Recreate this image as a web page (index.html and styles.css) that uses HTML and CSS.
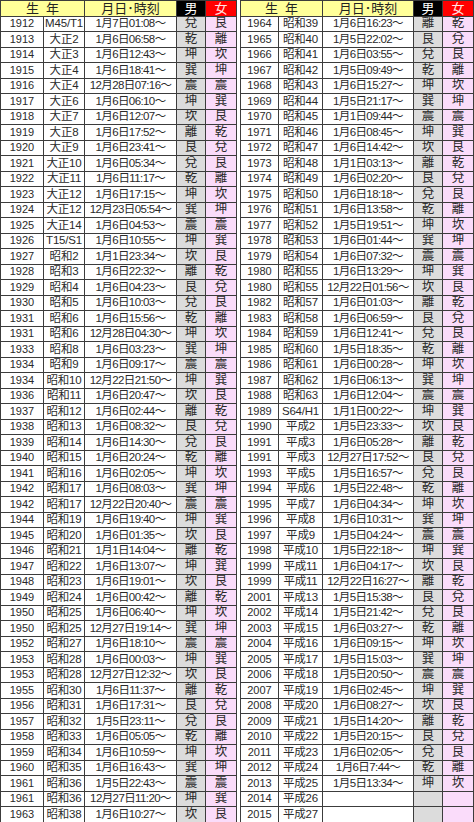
FILE: index.html
```html
<!DOCTYPE html>
<html lang="ja">
<head>
<meta charset="utf-8">
<title>年盤表</title>
<link rel="stylesheet" href="styles.css">
</head>
<body>
<div class="wrap">
<table class="tbl tbl-left">
<colgroup><col class="c-year"><col class="c-era"><col class="c-date"><col class="c-m"><col class="c-f"></colgroup>
<thead><tr><th colspan="2" class="h-y">生&nbsp;&nbsp;年</th><th class="h-y">月日･時刻</th><th class="h-m">男</th><th class="h-f">女</th></tr></thead>
<tbody>
<tr><td>1912</td><td class="e">M45/T1</td><td class="d">1月7日01:08～</td><td class="m">兌</td><td class="f">艮</td></tr>
<tr><td>1913</td><td class="e">大正2</td><td class="d">1月6日06:58～</td><td class="m">乾</td><td class="f">離</td></tr>
<tr><td>1914</td><td class="e">大正3</td><td class="d">1月6日12:43～</td><td class="m">坤</td><td class="f">坎</td></tr>
<tr><td>1915</td><td class="e">大正4</td><td class="d">1月6日18:41～</td><td class="m">巽</td><td class="f">坤</td></tr>
<tr><td>1916</td><td class="e">大正4</td><td class="d">12月28日07:16～</td><td class="m">震</td><td class="f">震</td></tr>
<tr><td>1917</td><td class="e">大正6</td><td class="d">1月6日06:10～</td><td class="m">坤</td><td class="f">巽</td></tr>
<tr><td>1918</td><td class="e">大正7</td><td class="d">1月6日12:07～</td><td class="m">坎</td><td class="f">艮</td></tr>
<tr><td>1919</td><td class="e">大正8</td><td class="d">1月6日17:52～</td><td class="m">離</td><td class="f">乾</td></tr>
<tr><td>1920</td><td class="e">大正9</td><td class="d">1月6日23:41～</td><td class="m">艮</td><td class="f">兌</td></tr>
<tr><td>1921</td><td class="e">大正10</td><td class="d">1月6日05:34～</td><td class="m">兌</td><td class="f">艮</td></tr>
<tr><td>1922</td><td class="e">大正11</td><td class="d">1月6日11:17～</td><td class="m">乾</td><td class="f">離</td></tr>
<tr><td>1923</td><td class="e">大正12</td><td class="d">1月6日17:15～</td><td class="m">坤</td><td class="f">坎</td></tr>
<tr><td>1924</td><td class="e">大正12</td><td class="d">12月23日05:54～</td><td class="m">巽</td><td class="f">坤</td></tr>
<tr><td>1925</td><td class="e">大正14</td><td class="d">1月6日04:53～</td><td class="m">震</td><td class="f">震</td></tr>
<tr><td>1926</td><td class="e">T15/S1</td><td class="d">1月6日10:55～</td><td class="m">坤</td><td class="f">巽</td></tr>
<tr><td>1927</td><td class="e">昭和2</td><td class="d">1月1日23:34～</td><td class="m">坎</td><td class="f">艮</td></tr>
<tr><td>1928</td><td class="e">昭和3</td><td class="d">1月6日22:32～</td><td class="m">離</td><td class="f">乾</td></tr>
<tr><td>1929</td><td class="e">昭和4</td><td class="d">1月6日04:23～</td><td class="m">艮</td><td class="f">兌</td></tr>
<tr><td>1930</td><td class="e">昭和5</td><td class="d">1月6日10:03～</td><td class="m">兌</td><td class="f">艮</td></tr>
<tr><td>1931</td><td class="e">昭和6</td><td class="d">1月6日15:56～</td><td class="m">乾</td><td class="f">離</td></tr>
<tr><td>1931</td><td class="e">昭和6</td><td class="d">12月28日04:30～</td><td class="m">坤</td><td class="f">坎</td></tr>
<tr><td>1933</td><td class="e">昭和8</td><td class="d">1月6日03:23～</td><td class="m">巽</td><td class="f">坤</td></tr>
<tr><td>1934</td><td class="e">昭和9</td><td class="d">1月6日09:17～</td><td class="m">震</td><td class="f">震</td></tr>
<tr><td>1934</td><td class="e">昭和10</td><td class="d">12月22日21:50～</td><td class="m">坤</td><td class="f">巽</td></tr>
<tr><td>1936</td><td class="e">昭和11</td><td class="d">1月6日20:47～</td><td class="m">坎</td><td class="f">艮</td></tr>
<tr><td>1937</td><td class="e">昭和12</td><td class="d">1月6日02:44～</td><td class="m">離</td><td class="f">乾</td></tr>
<tr><td>1938</td><td class="e">昭和13</td><td class="d">1月6日08:32～</td><td class="m">艮</td><td class="f">兌</td></tr>
<tr><td>1939</td><td class="e">昭和14</td><td class="d">1月6日14:30～</td><td class="m">兌</td><td class="f">艮</td></tr>
<tr><td>1940</td><td class="e">昭和15</td><td class="d">1月6日20:24～</td><td class="m">乾</td><td class="f">離</td></tr>
<tr><td>1941</td><td class="e">昭和16</td><td class="d">1月6日02:05～</td><td class="m">坤</td><td class="f">坎</td></tr>
<tr><td>1942</td><td class="e">昭和17</td><td class="d">1月6日08:03～</td><td class="m">巽</td><td class="f">坤</td></tr>
<tr><td>1942</td><td class="e">昭和17</td><td class="d">12月22日20:40～</td><td class="m">震</td><td class="f">震</td></tr>
<tr><td>1944</td><td class="e">昭和19</td><td class="d">1月6日19:40～</td><td class="m">坤</td><td class="f">巽</td></tr>
<tr><td>1945</td><td class="e">昭和20</td><td class="d">1月6日01:35～</td><td class="m">坎</td><td class="f">艮</td></tr>
<tr><td>1946</td><td class="e">昭和21</td><td class="d">1月1日14:04～</td><td class="m">離</td><td class="f">乾</td></tr>
<tr><td>1947</td><td class="e">昭和22</td><td class="d">1月6日13:07～</td><td class="m">坤</td><td class="f">巽</td></tr>
<tr><td>1948</td><td class="e">昭和23</td><td class="d">1月6日19:01～</td><td class="m">坎</td><td class="f">艮</td></tr>
<tr><td>1949</td><td class="e">昭和24</td><td class="d">1月6日00:42～</td><td class="m">離</td><td class="f">乾</td></tr>
<tr><td>1950</td><td class="e">昭和25</td><td class="d">1月6日06:40～</td><td class="m">坤</td><td class="f">坎</td></tr>
<tr><td>1950</td><td class="e">昭和25</td><td class="d">12月27日19:14～</td><td class="m">巽</td><td class="f">坤</td></tr>
<tr><td>1952</td><td class="e">昭和27</td><td class="d">1月6日18:10～</td><td class="m">震</td><td class="f">震</td></tr>
<tr><td>1953</td><td class="e">昭和28</td><td class="d">1月6日00:03～</td><td class="m">坤</td><td class="f">巽</td></tr>
<tr><td>1953</td><td class="e">昭和28</td><td class="d">12月27日12:32～</td><td class="m">坎</td><td class="f">艮</td></tr>
<tr><td>1955</td><td class="e">昭和30</td><td class="d">1月6日11:37～</td><td class="m">離</td><td class="f">乾</td></tr>
<tr><td>1956</td><td class="e">昭和31</td><td class="d">1月6日17:31～</td><td class="m">艮</td><td class="f">兌</td></tr>
<tr><td>1957</td><td class="e">昭和32</td><td class="d">1月5日23:11～</td><td class="m">兌</td><td class="f">艮</td></tr>
<tr><td>1958</td><td class="e">昭和33</td><td class="d">1月6日05:05～</td><td class="m">乾</td><td class="f">離</td></tr>
<tr><td>1959</td><td class="e">昭和34</td><td class="d">1月6日10:59～</td><td class="m">坤</td><td class="f">坎</td></tr>
<tr><td>1960</td><td class="e">昭和35</td><td class="d">1月6日16:43～</td><td class="m">巽</td><td class="f">坤</td></tr>
<tr><td>1961</td><td class="e">昭和36</td><td class="d">1月5日22:43～</td><td class="m">震</td><td class="f">震</td></tr>
<tr><td>1961</td><td class="e">昭和36</td><td class="d">12月27日11:20～</td><td class="m">坤</td><td class="f">巽</td></tr>
<tr><td>1963</td><td class="e">昭和38</td><td class="d">1月6日10:27～</td><td class="m">坎</td><td class="f">艮</td></tr>
</tbody>
</table>
<table class="tbl tbl-right">
<colgroup><col class="c-year"><col class="c-era"><col class="c-date"><col class="c-m"><col class="c-f"></colgroup>
<thead><tr><th colspan="2" class="h-y">生&nbsp;&nbsp;年</th><th class="h-y">月日･時刻</th><th class="h-m">男</th><th class="h-f">女</th></tr></thead>
<tbody>
<tr><td>1964</td><td class="e">昭和39</td><td class="d">1月6日16:23～</td><td class="m">離</td><td class="f">乾</td></tr>
<tr><td>1965</td><td class="e">昭和40</td><td class="d">1月5日22:02～</td><td class="m">艮</td><td class="f">兌</td></tr>
<tr><td>1966</td><td class="e">昭和41</td><td class="d">1月6日03:55～</td><td class="m">兌</td><td class="f">艮</td></tr>
<tr><td>1967</td><td class="e">昭和42</td><td class="d">1月5日09:49～</td><td class="m">乾</td><td class="f">離</td></tr>
<tr><td>1968</td><td class="e">昭和43</td><td class="d">1月6日15:27～</td><td class="m">坤</td><td class="f">坎</td></tr>
<tr><td>1969</td><td class="e">昭和44</td><td class="d">1月5日21:17～</td><td class="m">巽</td><td class="f">坤</td></tr>
<tr><td>1970</td><td class="e">昭和45</td><td class="d">1月1日09:44～</td><td class="m">震</td><td class="f">震</td></tr>
<tr><td>1971</td><td class="e">昭和46</td><td class="d">1月6日08:45～</td><td class="m">坤</td><td class="f">巽</td></tr>
<tr><td>1972</td><td class="e">昭和47</td><td class="d">1月6日14:42～</td><td class="m">坎</td><td class="f">艮</td></tr>
<tr><td>1973</td><td class="e">昭和48</td><td class="d">1月1日03:13～</td><td class="m">離</td><td class="f">乾</td></tr>
<tr><td>1974</td><td class="e">昭和49</td><td class="d">1月6日02:20～</td><td class="m">艮</td><td class="f">兌</td></tr>
<tr><td>1975</td><td class="e">昭和50</td><td class="d">1月6日18:18～</td><td class="m">兌</td><td class="f">艮</td></tr>
<tr><td>1976</td><td class="e">昭和51</td><td class="d">1月6日13:58～</td><td class="m">乾</td><td class="f">離</td></tr>
<tr><td>1977</td><td class="e">昭和52</td><td class="d">1月5日19:51～</td><td class="m">坤</td><td class="f">坎</td></tr>
<tr><td>1978</td><td class="e">昭和53</td><td class="d">1月6日01:44～</td><td class="m">巽</td><td class="f">坤</td></tr>
<tr><td>1979</td><td class="e">昭和54</td><td class="d">1月6日07:32～</td><td class="m">震</td><td class="f">震</td></tr>
<tr><td>1980</td><td class="e">昭和55</td><td class="d">1月6日13:29～</td><td class="m">坤</td><td class="f">巽</td></tr>
<tr><td>1980</td><td class="e">昭和55</td><td class="d">12月22日01:56～</td><td class="m">坎</td><td class="f">艮</td></tr>
<tr><td>1982</td><td class="e">昭和57</td><td class="d">1月6日01:03～</td><td class="m">離</td><td class="f">乾</td></tr>
<tr><td>1983</td><td class="e">昭和58</td><td class="d">1月6日06:59～</td><td class="m">艮</td><td class="f">兌</td></tr>
<tr><td>1984</td><td class="e">昭和59</td><td class="d">1月6日12:41～</td><td class="m">兌</td><td class="f">艮</td></tr>
<tr><td>1985</td><td class="e">昭和60</td><td class="d">1月5日18:35～</td><td class="m">乾</td><td class="f">離</td></tr>
<tr><td>1986</td><td class="e">昭和61</td><td class="d">1月6日00:28～</td><td class="m">坤</td><td class="f">坎</td></tr>
<tr><td>1987</td><td class="e">昭和62</td><td class="d">1月6日06:13～</td><td class="m">巽</td><td class="f">坤</td></tr>
<tr><td>1988</td><td class="e">昭和63</td><td class="d">1月6日12:04～</td><td class="m">震</td><td class="f">震</td></tr>
<tr><td>1989</td><td class="e">S64/H1</td><td class="d">1月1日00:22～</td><td class="m">坤</td><td class="f">巽</td></tr>
<tr><td>1990</td><td class="e">平成2</td><td class="d">1月5日23:33～</td><td class="m">坎</td><td class="f">艮</td></tr>
<tr><td>1991</td><td class="e">平成3</td><td class="d">1月6日05:28～</td><td class="m">離</td><td class="f">乾</td></tr>
<tr><td>1991</td><td class="e">平成3</td><td class="d">12月27日17:52～</td><td class="m">艮</td><td class="f">兌</td></tr>
<tr><td>1993</td><td class="e">平成5</td><td class="d">1月5日16:57～</td><td class="m">兌</td><td class="f">艮</td></tr>
<tr><td>1994</td><td class="e">平成6</td><td class="d">1月5日22:48～</td><td class="m">乾</td><td class="f">離</td></tr>
<tr><td>1995</td><td class="e">平成7</td><td class="d">1月6日04:34～</td><td class="m">坤</td><td class="f">坎</td></tr>
<tr><td>1996</td><td class="e">平成8</td><td class="d">1月6日10:31～</td><td class="m">巽</td><td class="f">坤</td></tr>
<tr><td>1997</td><td class="e">平成9</td><td class="d">1月5日04:24～</td><td class="m">震</td><td class="f">震</td></tr>
<tr><td>1998</td><td class="e">平成10</td><td class="d">1月5日22:18～</td><td class="m">坤</td><td class="f">巽</td></tr>
<tr><td>1999</td><td class="e">平成11</td><td class="d">1月6日04:17～</td><td class="m">坎</td><td class="f">艮</td></tr>
<tr><td>1999</td><td class="e">平成11</td><td class="d">12月22日16:27～</td><td class="m">離</td><td class="f">乾</td></tr>
<tr><td>2001</td><td class="e">平成13</td><td class="d">1月5日15:38～</td><td class="m">艮</td><td class="f">兌</td></tr>
<tr><td>2002</td><td class="e">平成14</td><td class="d">1月5日21:42～</td><td class="m">兌</td><td class="f">艮</td></tr>
<tr><td>2003</td><td class="e">平成15</td><td class="d">1月6日03:27～</td><td class="m">乾</td><td class="f">離</td></tr>
<tr><td>2004</td><td class="e">平成16</td><td class="d">1月6日09:15～</td><td class="m">坤</td><td class="f">坎</td></tr>
<tr><td>2005</td><td class="e">平成17</td><td class="d">1月5日15:03～</td><td class="m">巽</td><td class="f">坤</td></tr>
<tr><td>2006</td><td class="e">平成18</td><td class="d">1月5日20:50～</td><td class="m">震</td><td class="f">震</td></tr>
<tr><td>2007</td><td class="e">平成19</td><td class="d">1月6日02:45～</td><td class="m">坤</td><td class="f">巽</td></tr>
<tr><td>2008</td><td class="e">平成20</td><td class="d">1月6日08:27～</td><td class="m">坎</td><td class="f">艮</td></tr>
<tr><td>2009</td><td class="e">平成21</td><td class="d">1月5日14:20～</td><td class="m">離</td><td class="f">乾</td></tr>
<tr><td>2010</td><td class="e">平成22</td><td class="d">1月5日20:15～</td><td class="m">艮</td><td class="f">兌</td></tr>
<tr><td>2011</td><td class="e">平成23</td><td class="d">1月6日02:05～</td><td class="m">兌</td><td class="f">艮</td></tr>
<tr><td>2012</td><td class="e">平成24</td><td class="d">1月6日7:44～</td><td class="m">乾</td><td class="f">離</td></tr>
<tr><td>2013</td><td class="e">平成25</td><td class="d">1月5日13:34～</td><td class="m">坤</td><td class="f">坎</td></tr>
<tr><td>2014</td><td class="e">平成26</td><td class="d"></td><td class="m"></td><td class="f"></td></tr>
<tr><td>2015</td><td class="e">平成27</td><td class="d"></td><td class="m"></td><td class="f"></td></tr>
</tbody>
</table>
</div>
</body>
</html>
```

FILE: styles.css
```css
html, body {
  margin: 0;
  padding: 0;
  background: #ffffff;
}

.wrap {
  display: flex;
  justify-content: space-between;
  width: 474px;
  height: 822px;
  overflow: hidden;
}

.tbl {
  border-collapse: collapse;
  table-layout: fixed;
  font-family: "Liberation Sans", "Noto Sans CJK JP", sans-serif;
  font-size: 11px;
  color: #2a2a2a;
}

.tbl-left {
  width: 236px;
}

.tbl-right {
  width: 233px;
}

.tbl-left .c-year { width: 43px; }
.tbl-left .c-era { width: 41px; }
.tbl-left .c-date { width: 92px; }
.tbl-left .c-m { width: 29px; }
.tbl-left .c-f { width: 31px; }

.tbl-right .c-year { width: 38px; }
.tbl-right .c-era { width: 44px; }
.tbl-right .c-date { width: 91px; }
.tbl-right .c-m { width: 29px; }
.tbl-right .c-f { width: 31px; }

.tbl tr {
  height: 15.5px;
}

.tbl th,
.tbl td {
  border: 1px solid #3c3c3c;
  padding: 0;
  text-align: center;
  vertical-align: middle;
  line-height: 13px;
  white-space: nowrap;
  overflow: hidden;
}

.tbl th {
  font-weight: normal;
  font-size: 13px;
}

.tbl td.e {
  font-size: 11.5px;
  letter-spacing: -0.2px;
}

.tbl td.d {
  font-size: 11.5px;
  letter-spacing: -0.6px;
}

.h-y {
  background: #ffff99;
  color: #222222;
}

.h-m {
  background: #000000;
  color: #ffffff;
}

.h-f {
  background: #ff0000;
  color: #ffe6e6;
}

.tbl td.m {
  background: #dcdcdc;
  font-size: 12.5px;
}

.tbl td.f {
  background: #fadcfa;
  font-size: 12.5px;
}
```
